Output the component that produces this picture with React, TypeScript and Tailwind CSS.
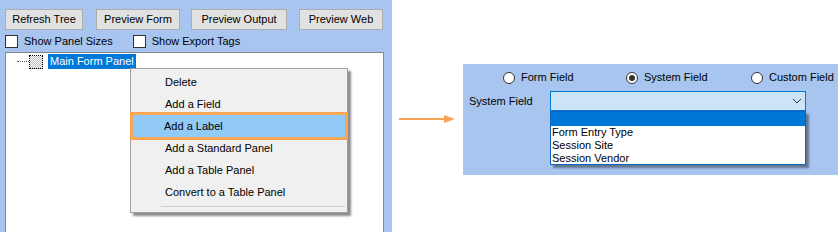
import React from 'react';

const font = { fontFamily: '"Liberation Sans", Arial, sans-serif' };

const Btn: React.FC<{ label: string; w: string }> = ({ label, w }) => (
  <button className={`${w} h-[21px] bg-[#e1e1e1] border border-[#adadad] text-[11px] leading-none text-black flex items-center justify-center whitespace-nowrap`}>{label}</button>
);

const Check: React.FC<{ label: string }> = ({ label }) => (
  <div className="flex items-center gap-[6px]">
    <div className="w-[13px] h-[13px] bg-white border border-[#333]" />
    <span className="text-[11px] leading-none whitespace-nowrap">{label}</span>
  </div>
);

const Radio: React.FC<{ label: string; on?: boolean; w: string }> = ({ label, on, w }) => (
  <div className={`${w} flex items-center gap-[6px] shrink-0`}>
    <div className="w-[12px] h-[12px] shrink-0 rounded-full bg-white border border-[#333] flex items-center justify-center">
      {on && <div className="w-[6px] h-[6px] rounded-full bg-[#333]" />}
    </div>
    <span className="text-[11px] leading-none whitespace-nowrap">{label}</span>
  </div>
);

const menuItems = ['Delete', 'Add a Field', 'Add a Label', 'Add a Standard Panel', 'Add a Table Panel', 'Convert to a Table Panel'];

export default function App() {
  return (
    <div className="w-[838px] h-[239px] bg-white flex items-start text-black" style={font}>
      {/* Left designer panel */}
      <div className="w-[392px] h-[232px] shrink-0 bg-[#a7c5ee] flex flex-col pl-[5px] pt-[9px]">
        <div className="flex">
          <Btn label="Refresh Tree" w="w-[78px]" />
          <div className="ml-[13px]"><Btn label="Preview Form" w="w-[84px]" /></div>
          <div className="ml-[11px]"><Btn label="Preview Output" w="w-[96px]" /></div>
          <div className="ml-[12px]"><Btn label="Preview Web" w="w-[84px]" /></div>
        </div>
        <div className="flex mt-[5px] h-[13px]">
          <Check label="Show Panel Sizes" />
          <div className="ml-[20px]"><Check label="Show Export Tags" /></div>
        </div>
        <div className="relative mt-[4px] w-[379px] flex-1 bg-white border-l border-t border-r border-[#828790]">
          <div className="flex items-center mt-[1px] h-[15px]">
            <div className="ml-[11px] w-[12px] border-t border-dotted border-[#555]" />
            <div className="w-[14px] h-[14px] border border-dotted border-black bg-[repeating-conic-gradient(#bbb_0%_25%,#fff_0%_50%)] bg-[length:2px_2px]" />
            <div className="ml-[5px] h-[15px] px-[2px] bg-[#0078d7] text-white text-[11px] leading-[15px] whitespace-nowrap">Main Form Panel</div>
          </div>

          {/* Context menu */}
          <div className="absolute left-[124px] top-[15px] w-[218px] h-[145px] bg-[#f0f0f0] border border-[#a0a0a0] shadow-[3px_3px_2px_rgba(0,0,0,0.45)] pt-[2px]">
            {menuItems.map((m) => (
              <div
                key={m}
                className={`h-[22px] flex items-center text-[11px] whitespace-nowrap ${m === 'Add a Label' ? 'mx-[2px] pl-[31px] bg-[#91c9f7] outline outline-[3px] outline-[#f8a554]' : 'pl-[34px]'}`}
              >
                {m}
              </div>
            ))}
            <div className="ml-[30px] mr-[2px] mt-[3px] border-t border-[#d0d0d0]" />
          </div>
        </div>
      </div>

      {/* Arrow */}
      <div className="w-[71px] shrink-0 pt-[114px]">
        <svg width="71" height="10" viewBox="0 0 71 10">
          <line x1="7" y1="5" x2="54" y2="5" stroke="#f7a251" strokeWidth="2" />
          <polygon points="52,1 63,5 52,9" fill="#f7a251" />
        </svg>
      </div>

      {/* Right field picker */}
      <div className="mt-[64px] w-[375px] h-[111px] shrink-0 bg-[#a7c5ee] flex flex-col">
        <div className="flex items-center h-[13px] mt-[7px] pl-[40px]">
          <Radio label="Form Field" w="w-[123px]" />
          <Radio label="System Field" on w="w-[125px]" />
          <Radio label="Custom Field" w="w-[80px]" />
        </div>
        <div className="flex mt-[7px]">
          <span className="ml-[6px] w-[81px] text-[11px] leading-[20px] whitespace-nowrap">System Field</span>
          <div className="relative">
            <div className="w-[256px] h-[20px] bg-[#cce4f7] border border-[#0078d7] flex items-center justify-end pr-[3px]">
              <svg width="10" height="6" viewBox="0 0 10 6">
                <polyline points="1,1 5,5 9,1" fill="none" stroke="#333" strokeWidth="1" />
              </svg>
            </div>
            <div className="absolute left-0 top-[20px] w-[256px] h-[54px] bg-white border border-[#0c64c0] shadow-[3px_3px_2px_rgba(0,0,0,0.4)] text-[11px] leading-[13px]">
              <div className="h-[14px] bg-[#0078d7]" />
              <div className="pl-[1px] whitespace-nowrap">Form Entry Type</div>
              <div className="pl-[1px] whitespace-nowrap">Session Site</div>
              <div className="pl-[1px] whitespace-nowrap">Session Vendor</div>
            </div>
          </div>
        </div>
      </div>
    </div>
  );
}
